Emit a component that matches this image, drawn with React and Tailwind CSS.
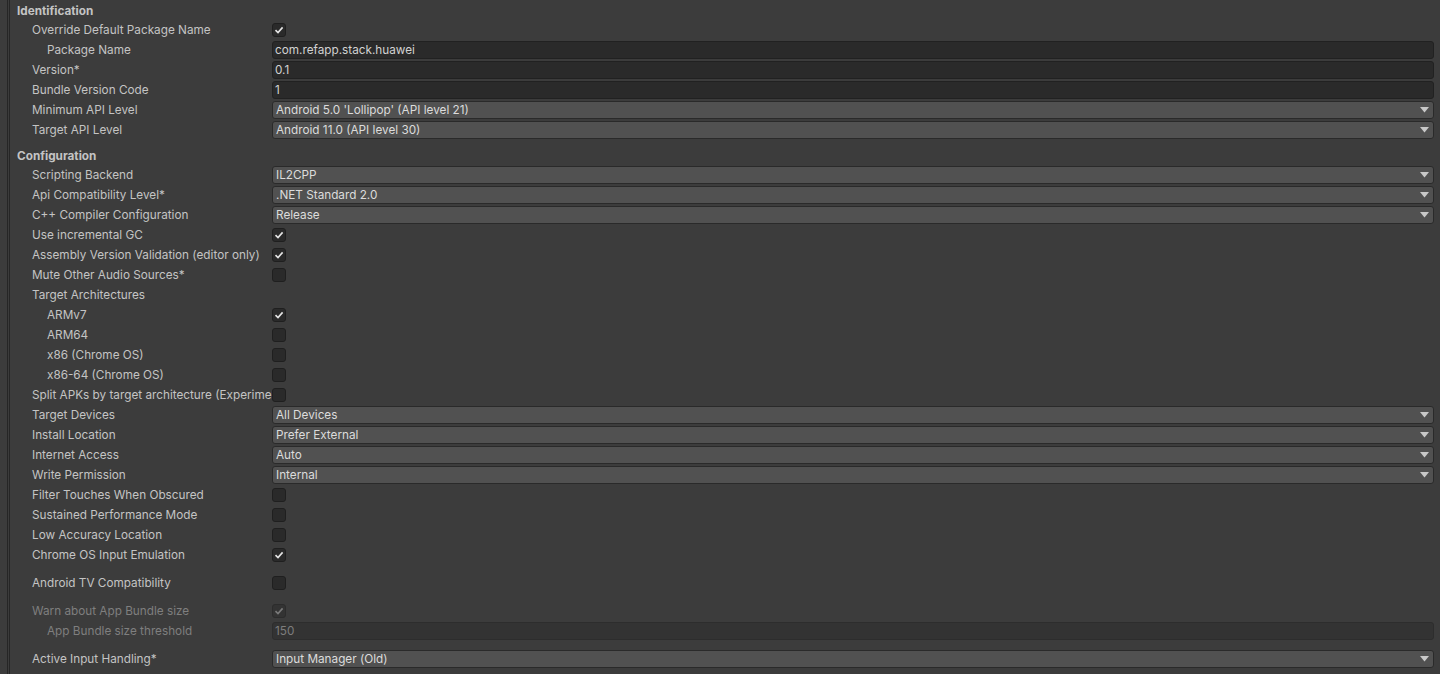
import React from "react";

const font = { fontFamily: "Inter, 'Noto Sans', sans-serif" };

function Check({ on, dim }) {
  return (
    <div
      className={
        "w-[14px] h-[14px] rounded-[3px] border flex items-center justify-center " +
        (dim ? "bg-[#333333] border-[#2c2c2c]" : "bg-[#2a2a2a] border-[#1f1f1f]")
      }
    >
      {on && (
        <svg width="10" height="10" viewBox="0 0 10 10">
          <path
            d="M1.5 5.2 L4 7.6 L8.6 2.4"
            fill="none"
            stroke={dim ? "#7a7a7a" : "#e4e4e4"}
            strokeWidth="1.6"
          />
        </svg>
      )}
    </div>
  );
}

function TextField({ value, dim }) {
  return (
    <div
      className={
        "h-[18px] w-full rounded-[3px] border flex items-center pl-[2px] " +
        (dim
          ? "bg-[#333333] border-[#2d2d2d] text-[#7d7d7d]"
          : "bg-[#2a2a2a] border-[#212121] text-[#d2d2d2]")
      }
    >
      {value}
    </div>
  );
}

function Dropdown({ value }) {
  return (
    <div className="h-[18px] w-full rounded-[3px] border border-[#2a2a2a] bg-[#515151] flex items-center justify-between pl-[3px] pr-[4px] text-[#dcdcdc]">
      <span>{value}</span>
      <svg width="9" height="6" viewBox="0 0 9 6">
        <path d="M0 0 H9 L4.5 5.5 Z" fill="#c8c8c8" />
      </svg>
    </div>
  );
}

function Row({ label, level = 1, dim, children, gap }) {
  return (
    <div className={"flex h-[20px] items-center " + (gap ? "mt-[8px]" : "")}>
      <div
        className={
          "w-[262px] shrink-0 overflow-hidden whitespace-nowrap " +
          (level === 2 ? "pl-[37px] " : "pl-[22px] ") +
          (dim ? "text-[#7f7f7f]" : "text-[#c4c4c4]")
        }
      >
        {label}
      </div>
      <div className="flex-1 flex items-center pr-[6px]">{children}</div>
    </div>
  );
}

function Heading({ text, first }) {
  return (
    <div
      className={
        "h-[19px] flex items-center pt-[2px] pl-[7px] font-bold text-[#c4c4c4] " +
        (first ? "" : "mt-[6px]")
      }
    >
      {text}
    </div>
  );
}

export default function App() {
  return (
    <div
      className="w-[1440px] h-[674px] overflow-hidden bg-[#3c3c3c] pl-[7px] text-[11.75px] leading-[15px]"
      style={font}
    >
      <div className="h-full border-l border-[#262626] pl-[1px]">
        <div className="h-full border-l border-[#262626] pt-[1px]">
          <Heading text="Identification" first />
          <Row label="Override Default Package Name">
            <Check on />
          </Row>
          <Row label="Package Name" level={2}>
            <TextField value="com.refapp.stack.huawei" />
          </Row>
          <Row label="Version*">
            <TextField value="0.1" />
          </Row>
          <Row label="Bundle Version Code">
            <TextField value="1" />
          </Row>
          <Row label="Minimum API Level">
            <Dropdown value="Android 5.0 'Lollipop' (API level 21)" />
          </Row>
          <Row label="Target API Level">
            <Dropdown value="Android 11.0 (API level 30)" />
          </Row>

          <Heading text="Configuration" />
          <Row label="Scripting Backend">
            <Dropdown value="IL2CPP" />
          </Row>
          <Row label="Api Compatibility Level*">
            <Dropdown value=".NET Standard 2.0" />
          </Row>
          <Row label="C++ Compiler Configuration">
            <Dropdown value="Release" />
          </Row>
          <Row label="Use incremental GC">
            <Check on />
          </Row>
          <Row label="Assembly Version Validation (editor only)">
            <Check on />
          </Row>
          <Row label="Mute Other Audio Sources*">
            <Check />
          </Row>
          <Row label="Target Architectures" />
          <Row label="ARMv7" level={2}>
            <Check on />
          </Row>
          <Row label="ARM64" level={2}>
            <Check />
          </Row>
          <Row label="x86 (Chrome OS)" level={2}>
            <Check />
          </Row>
          <Row label="x86-64 (Chrome OS)" level={2}>
            <Check />
          </Row>
          <Row label="Split APKs by target architecture (Experimental)">
            <Check />
          </Row>
          <Row label="Target Devices">
            <Dropdown value="All Devices" />
          </Row>
          <Row label="Install Location">
            <Dropdown value="Prefer External" />
          </Row>
          <Row label="Internet Access">
            <Dropdown value="Auto" />
          </Row>
          <Row label="Write Permission">
            <Dropdown value="Internal" />
          </Row>
          <Row label="Filter Touches When Obscured">
            <Check />
          </Row>
          <Row label="Sustained Performance Mode">
            <Check />
          </Row>
          <Row label="Low Accuracy Location">
            <Check />
          </Row>
          <Row label="Chrome OS Input Emulation">
            <Check on />
          </Row>
          <Row label="Android TV Compatibility" gap>
            <Check />
          </Row>
          <Row label="Warn about App Bundle size" dim gap>
            <Check on dim />
          </Row>
          <Row label="App Bundle size threshold" level={2} dim>
            <TextField value="150" dim />
          </Row>
          <Row label="Active Input Handling*" gap>
            <Dropdown value="Input Manager (Old)" />
          </Row>
        </div>
      </div>
    </div>
  );
}
